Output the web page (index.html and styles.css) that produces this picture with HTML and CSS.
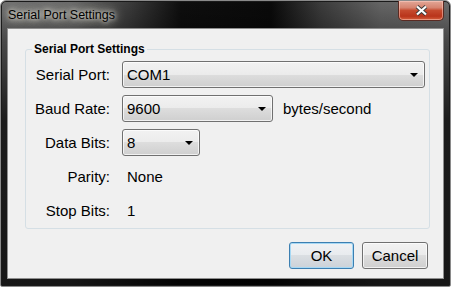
FILE: index.html
```html
<!DOCTYPE html>
<html lang="en">
  <head>
    <meta charset="UTF-8" />
    <title>Serial Port Settings</title>
    <link rel="stylesheet" href="styles.css">
  </head>
  <body>
    <div class="window">
      <div class="titlebar">
        <span class="title">Serial Port Settings</span>
        <button class="close">
          <svg width="13" height="11" viewBox="0 0 13 11">
            <path d="M2 1.5 L11 9.5 M11 1.5 L2 9.5" stroke="#3a3a3a" stroke-width="4" />
            <path d="M2 1.5 L11 9.5 M11 1.5 L2 9.5" stroke="#fff" stroke-width="2.2" />
          </svg>
        </button>
      </div>
      <div class="client">
        <div class="group">
          <span class="group-title">Serial Port Settings</span>
          <div class="form">
            <span class="label">Serial Port:</span>
            <div class="field">
              <div class="combo port">COM1<span class="arrow"></span></div>
            </div>
            <span class="label">Baud Rate:</span>
            <div class="field">
              <div class="combo baud">9600<span class="arrow"></span></div>
              <span class="unit">bytes/second</span>
            </div>
            <span class="label">Data Bits:</span>
            <div class="field">
              <div class="combo bits">8<span class="arrow"></span></div>
            </div>
            <span class="label">Parity:</span>
            <div class="field"><span class="value">None</span></div>
            <span class="label">Stop Bits:</span>
            <div class="field"><span class="value">1</span></div>
          </div>
        </div>
        <div class="buttons">
          <button class="btn default">OK</button>
          <button class="btn">Cancel</button>
        </div>
      </div>
    </div>
  </body>
</html>
```

FILE: styles.css
```css
* {
  box-sizing: border-box;
}
body {
  margin: 0;
  padding: 0;
  background-color: #ffffff;
  font-family: "Liberation Sans", Arial, sans-serif;
}
.window {
  width: 451px;
  height: 287px;
  border: 1px solid #8a8a8a;
  border-radius: 6px 6px 2px 2px;
  display: flex;
  flex-direction: column;
  background:
    linear-gradient(to bottom, rgba(0, 0, 0, 0) 0, rgba(0, 0, 0, 0.35) 40px, rgba(0, 0, 0, 0.75) 120px, rgba(0, 0, 0, 0.8) 100%),
    linear-gradient(to right, #707070 0, #6a6a6a 70px, #3a3a3a 130px, #0e0e0e 180px, #0a0a0a 270px, #3c3c3c 320px, #666 380px, #6d6d6d 451px);
  box-shadow: inset 0 0 0 1px #1a1a1a;
}
.titlebar {
  height: 27px;
  display: flex;
  justify-content: space-between;
  align-items: flex-start;
  padding-left: 7px;
}
.title {
  margin-top: 6px;
  font-size: 12.5px;
  line-height: 16px;
  color: #000;
  text-shadow: 0 0 4px #e8e6dc, 0 0 8px #d8d6cc, 0 0 12px rgba(220, 218, 208, 0.9);
}
.close {
  width: 46px;
  height: 20px;
  margin: 0 6px 0 0;
  padding: 0;
  border: 1px solid #5a2a22;
  border-top: none;
  border-radius: 0 0 5px 5px;
  background: linear-gradient(to bottom, #e3a797 0, #d68470 35%, #c54a2e 50%, #b9341b 80%, #d5603d 100%);
  box-shadow: inset 0 0 0 1px rgba(255, 210, 200, 0.5);
  display: flex;
  align-items: center;
  justify-content: center;
}
.client {
  flex: 1;
  margin: 0 6px 7px 6px;
  border: 1px solid #8e8e8e;
  background-color: #f0f0f0;
  display: flex;
  flex-direction: column;
}
.group {
  position: relative;
  margin: 20px 13px 0 17px;
  border: 1px solid #d5dfe5;
  border-radius: 3px;
  padding: 11px 3px 4px 0;
}
.group-title {
  position: absolute;
  top: -8px;
  left: 6px;
  padding: 0 2px;
  background-color: #f0f0f0;
  font-size: 12px;
  line-height: 14px;
  font-weight: bold;
  color: #000;
}
.form {
  display: grid;
  grid-template-columns: 84px 1fr;
  grid-auto-rows: 27px;
  column-gap: 12px;
  row-gap: 7px;
  align-items: center;
  font-size: 15px;
  color: #000;
}
.label {
  text-align: right;
}
.field {
  display: flex;
  align-items: center;
  height: 27px;
}
.value {
  padding-left: 5px;
}
.unit {
  margin-left: 10px;
}
.combo {
  position: relative;
  height: 27px;
  border: 1px solid #707070;
  border-radius: 3px;
  padding-left: 4px;
  line-height: 25px;
  background: linear-gradient(to bottom, #f2f2f2 0, #ebebeb 50%, #dddddd 50%, #cfcfcf 100%);
  box-shadow: inset 0 0 0 1px rgba(255, 255, 255, 0.7);
}
.port {
  width: 303px;
}
.baud {
  width: 151px;
}
.bits {
  width: 78px;
}
.arrow {
  position: absolute;
  right: 6px;
  top: 11px;
  width: 0;
  height: 0;
  border-left: 4px solid transparent;
  border-right: 4px solid transparent;
  border-top: 4px solid #000;
}
.buttons {
  display: flex;
  justify-content: flex-end;
  gap: 8px;
  margin-top: 13px;
  padding-right: 15px;
}
.btn {
  height: 27px;
  width: 66px;
  padding: 0;
  border: 1px solid #707070;
  border-radius: 3px;
  font-family: "Liberation Sans", Arial, sans-serif;
  font-size: 15px;
  color: #000;
  background: linear-gradient(to bottom, #f2f2f2 0, #ebebeb 50%, #dddddd 50%, #cfcfcf 100%);
  box-shadow: inset 0 0 0 1px rgba(255, 255, 255, 0.7);
}
.btn.default {
  width: 65px;
  border-color: #3c7fb1;
  background: linear-gradient(to bottom, #f0f2f4 0, #e8ebee 50%, #dadee2 50%, #ccd2d8 100%);
  box-shadow: inset 0 0 0 1px #a6d8f4;
}
```
